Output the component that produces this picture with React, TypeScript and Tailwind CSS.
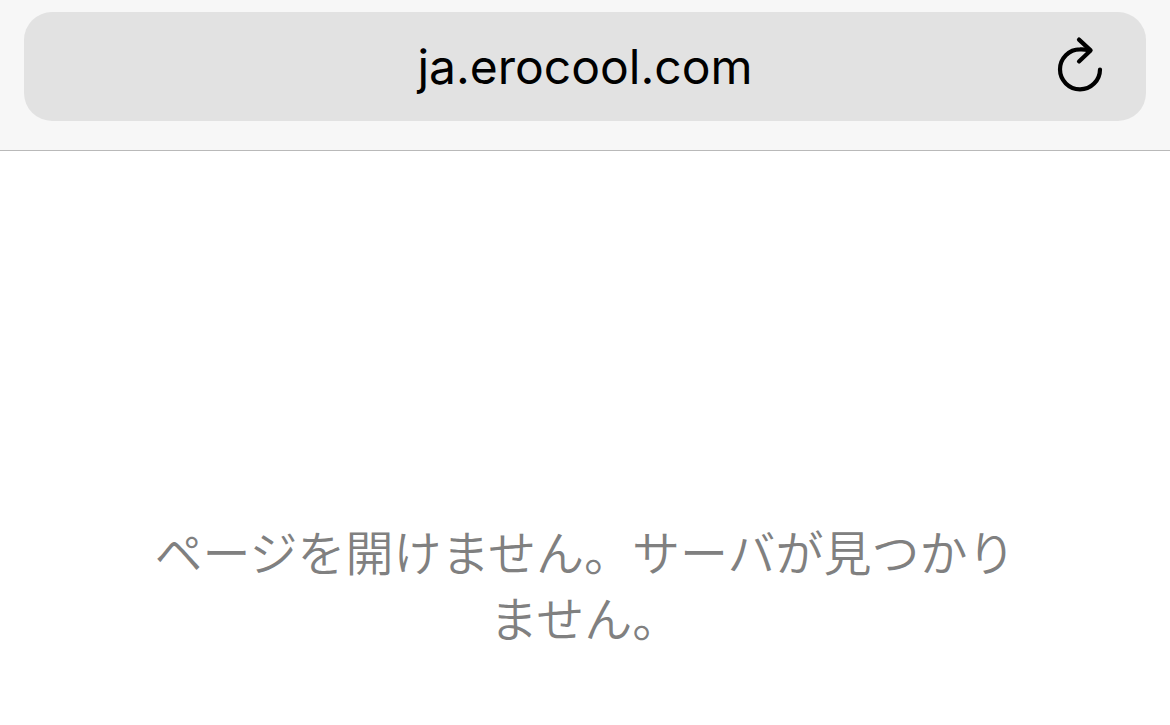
import React, { useState } from "react";

function ReloadIcon() {
  return (
    <svg
      viewBox="0 0 56 64"
      className="h-16 w-14"
      fill="none"
      stroke="currentColor"
      strokeWidth="4.2"
      strokeLinecap="round"
      strokeLinejoin="round"
      aria-hidden="true"
    >
      <path d="M48 34.5A20 20 0 1 1 28 14.4C31 14.2 34 14.6 37 15.2" />
      <path d="M27 4.6L38.6 15.4L27 26.4" />
    </svg>
  );
}

export default function App() {
  const [address, setAddress] = useState("ja.erocool.com");

  return (
    <div className="min-h-screen bg-white">
      <header className="border-b border-[#b9b9b9] bg-[#f7f7f7] px-6 pt-3 pb-[29px]">
        <form
          onSubmit={(e) => e.preventDefault()}
          className="grid h-[109px] grid-cols-[64px_1fr_64px] items-center rounded-[28px] bg-[#e2e2e2] px-[38px]"
        >
          <input
            type="text"
            aria-label="アドレス"
            value={address}
            onChange={(e) => setAddress(e.target.value)}
            className="col-start-2 h-20 w-full min-w-0 bg-transparent text-center font-['Inter',sans-serif] text-[48px] text-black outline-none"
          />
          <button type="submit" aria-label="再読み込み" className="flex justify-end text-black">
            <ReloadIcon />
          </button>
        </form>
      </header>

      <main className="px-[150px] pt-[366px] pb-[74px]">
        <p className="text-center font-['Noto_Sans_CJK_JP',sans-serif] text-[48px] leading-[66px] font-[350] text-[#808080]">
          ページを開けません。サーバが見つかりません。
        </p>
      </main>
    </div>
  );
}
